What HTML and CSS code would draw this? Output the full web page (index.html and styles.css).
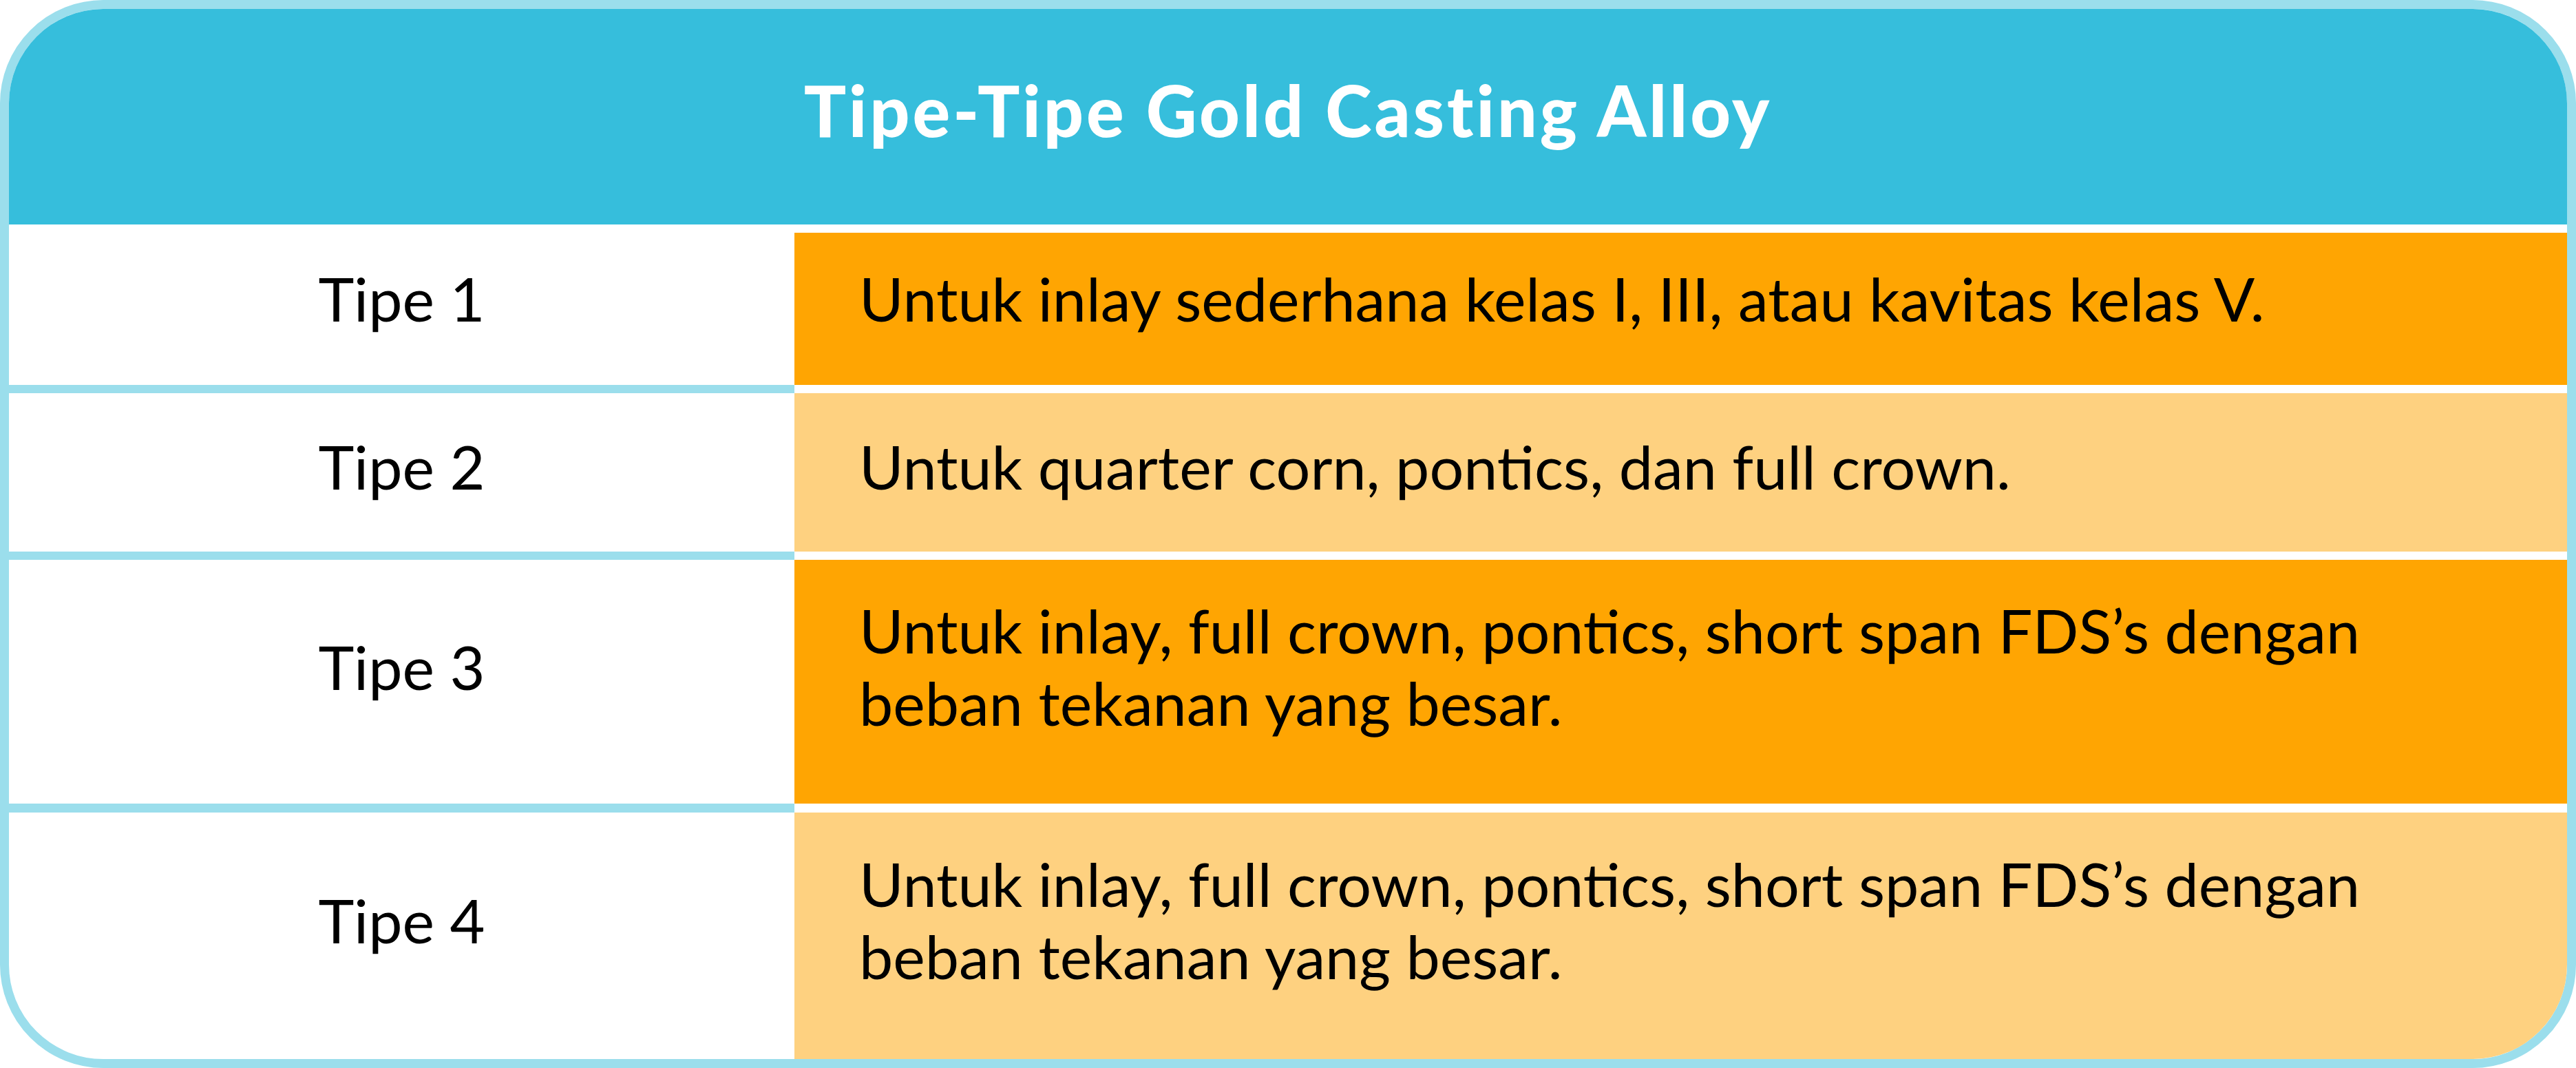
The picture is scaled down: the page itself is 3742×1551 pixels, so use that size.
FILE: index.html
```html
<!DOCTYPE html>
<html lang="id">
<head>
<meta charset="utf-8">
<title>Tipe-Tipe Gold Casting Alloy</title>
<link rel="stylesheet" href="styles.css">
</head>
<body>
<div class="card">
  <div class="card-header">
    <h1 class="card-title">Tipe-Tipe Gold Casting Alloy</h1>
  </div>
  <div class="table">
    <div class="row row-first">
      <div class="cell-label"><span class="label-box">Tipe 1</span></div>
      <div class="cell-desc desc-strong">Untuk inlay sederhana kelas I, III, atau kavitas kelas V.</div>
    </div>
    <div class="row row-second">
      <div class="cell-label"><span class="label-box">Tipe 2</span></div>
      <div class="cell-desc desc-soft">Untuk quarter corn, pontics, dan full crown.</div>
    </div>
    <div class="row row-third two-lines">
      <div class="cell-label"><span class="label-box">Tipe 3</span></div>
      <div class="cell-desc desc-strong">Untuk inlay, full crown, pontics, short span FDS’s dengan beban tekanan yang besar.</div>
    </div>
    <div class="row row-fourth two-lines">
      <div class="cell-label"><span class="label-box">Tipe 4</span></div>
      <div class="cell-desc desc-soft">Untuk inlay, full crown, pontics, short span FDS’s dengan beban tekanan yang besar.</div>
    </div>
  </div>
</div>
</body>
</html>
```

FILE: styles.css
```css
* {
  box-sizing: border-box;
}

html, body {
  margin: 0;
  padding: 0;
  background: #ffffff;
}

body {
  width: 3742px;
  height: 1551px;
  font-family: Lato, "Noto Sans", "Liberation Sans", sans-serif;
  color: #000000;
}

.card {
  width: 3742px;
  height: 1551px;
  border: 13px solid #9bdeec;
  border-radius: 150px;
  overflow: hidden;
  background: #ffffff;
  display: flex;
  flex-direction: column;
}

.card-header {
  height: 313px;
  background: #36bedc;
  display: flex;
  align-items: center;
  justify-content: center;
  padding-bottom: 20px;
}

.card-title {
  margin: 0;
  font-size: 102px;
  line-height: 122px;
  font-weight: 900;
  color: #ffffff;
  letter-spacing: 4px;
}

.table {
  display: grid;
  grid-template-rows: 233px 242px 366px 371px;
}

.row {
  display: grid;
  grid-template-columns: 1141px 1fr;
  --pad: 50px;
  --lines: 1;
}

.row-first { --pad: 43px; }
.row-second { --pad: 54px; }
.row-third { --pad: 50px; }
.row-fourth { --pad: 51px; }
.two-lines { --lines: 2; }

.cell-label {
  border-top: 12px solid #9bdeec;
  padding-top: var(--pad);
  display: flex;
  justify-content: center;
  font-size: 88px;
  line-height: 105px;
}

.row-first .cell-label {
  border-top-color: #ffffff;
}

.row-fourth .cell-label,
.row-fourth .cell-desc {
  border-top-width: 13px;
}

.label-box {
  height: calc(var(--lines) * 105px);
  display: flex;
  align-items: center;
}

.cell-desc {
  border-top: 12px solid #ffffff;
  padding: var(--pad) 120px 0 94px;
  font-size: 88px;
  line-height: 105px;
}

.desc-strong {
  background: #ffa502;
}

.desc-soft {
  background: #fed180;
}
```
